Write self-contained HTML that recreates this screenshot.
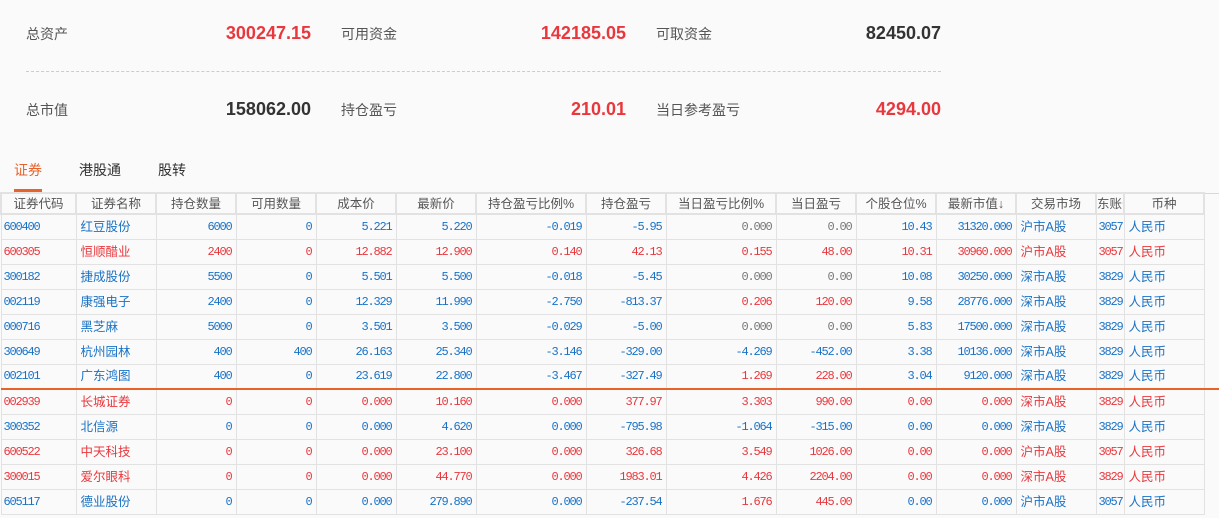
<!DOCTYPE html>
<html><head><meta charset="utf-8"><style>
*{margin:0;padding:0;box-sizing:border-box}
body{width:1219px;height:518px;overflow:hidden;background:#fafafa;font-family:"Liberation Sans","Noto Sans CJK SC",sans-serif;position:relative}
.lb{position:absolute;font-size:14px;color:#555}
.v{position:absolute;font-size:18px;font-weight:bold;text-align:right;width:200px}
.r{color:#e8383d}.k{color:#333}
.dash{position:absolute;left:26px;top:71px;width:915px;border-top:1px dashed #ccc}
.tab{position:absolute;top:160px;font-size:14px;color:#333}
table{position:absolute;left:0;top:192px;border-collapse:collapse;table-layout:fixed;border-top:1px solid #d8d8d8}
td,th{height:25px;line-height:14px;vertical-align:middle;border:1px solid #e2e2e2;font-size:12px;font-family:"Liberation Mono","Noto Sans CJK SC",monospace;letter-spacing:-1.2px;text-align:right;padding:0 4px;white-space:nowrap;overflow:hidden}
th{height:21px;font-weight:normal;font-family:"Liberation Sans","Noto Sans CJK SC",sans-serif;font-size:12.5px;color:#555;text-align:center;border:2px solid #e2e2e2;letter-spacing:0;padding:0}
td.n{text-align:left;font-family:"Liberation Sans","Noto Sans CJK SC",sans-serif;font-size:12.5px;letter-spacing:0}
td.c{text-align:left;padding-left:2px}
td.a{padding:0 1px}
td.a div{display:flex;justify-content:flex-end;overflow:hidden}
tr.B td{color:#1a72c6}tr.R td{color:#e8383d}
tr td.b{color:#1a72c6}tr td.rr{color:#e8383d}tr td.g{color:#777}
tr.sep td{border-bottom:2px solid #e8632a}
</style></head><body>
<div class="lb" style="left:26px;top:24px">总资产</div>
<div class="v r" style="left:111px;top:23px">300247.15</div>
<div class="lb" style="left:341px;top:24px">可用资金</div>
<div class="v r" style="left:426px;top:23px">142185.05</div>
<div class="lb" style="left:656px;top:24px">可取资金</div>
<div class="v k" style="left:741px;top:23px">82450.07</div>
<div class="dash"></div>
<div class="lb" style="left:26px;top:100px">总市值</div>
<div class="v k" style="left:111px;top:99px">158062.00</div>
<div class="lb" style="left:341px;top:100px">持仓盈亏</div>
<div class="v r" style="left:426px;top:99px">210.01</div>
<div class="lb" style="left:656px;top:100px">当日参考盈亏</div>
<div class="v r" style="left:741px;top:99px">4294.00</div>
<div class="tab" style="left:14px;color:#e8632a">证券</div>
<div style="position:absolute;left:14px;top:189px;width:28px;height:3px;background:#e8632a"></div>
<div class="tab" style="left:79px">港股通</div>
<div class="tab" style="left:158px">股转</div>
<table style="width:1219px">
<colgroup><col style="width:75px"><col style="width:80px"><col style="width:80px"><col style="width:80px"><col style="width:80px"><col style="width:80px"><col style="width:110px"><col style="width:80px"><col style="width:110px"><col style="width:80px"><col style="width:80px"><col style="width:80px"><col style="width:80px"><col style="width:28px"><col style="width:80px"><col style="width:16px"></colgroup>
<tr><th>证券代码</th><th>证券名称</th><th>持仓数量</th><th>可用数量</th><th>成本价</th><th>最新价</th><th>持仓盈亏比例%</th><th>持仓盈亏</th><th>当日盈亏比例%</th><th>当日盈亏</th><th>个股仓位%</th><th>最新市值↓</th><th>交易市场</th><th style="text-align:left">东账号</th><th>币种</th><th style="border:none"></th></tr>
<tr class="B"><td class="c">600400</td><td class="n">红豆股份</td><td>6000</td><td>0</td><td>5.221</td><td>5.220</td><td>-0.019</td><td>-5.95</td><td class="g">0.000</td><td class="g">0.00</td><td>10.43</td><td>31320.000</td><td class="n">沪市A股</td><td class="a"><div>3057</div></td><td class="n">人民币</td><td style="border:none"></td></tr>
<tr class="R"><td class="c">600305</td><td class="n">恒顺醋业</td><td>2400</td><td>0</td><td>12.882</td><td>12.900</td><td>0.140</td><td>42.13</td><td>0.155</td><td>48.00</td><td>10.31</td><td>30960.000</td><td class="n">沪市A股</td><td class="a"><div>3057</div></td><td class="n">人民币</td><td style="border:none"></td></tr>
<tr class="B"><td class="c">300182</td><td class="n">捷成股份</td><td>5500</td><td>0</td><td>5.501</td><td>5.500</td><td>-0.018</td><td>-5.45</td><td class="g">0.000</td><td class="g">0.00</td><td>10.08</td><td>30250.000</td><td class="n">深市A股</td><td class="a"><div>3829</div></td><td class="n">人民币</td><td style="border:none"></td></tr>
<tr class="B"><td class="c">002119</td><td class="n">康强电子</td><td>2400</td><td>0</td><td>12.329</td><td>11.990</td><td>-2.750</td><td>-813.37</td><td class="rr">0.206</td><td class="rr">120.00</td><td>9.58</td><td>28776.000</td><td class="n">深市A股</td><td class="a"><div>3829</div></td><td class="n">人民币</td><td style="border:none"></td></tr>
<tr class="B"><td class="c">000716</td><td class="n">黑芝麻</td><td>5000</td><td>0</td><td>3.501</td><td>3.500</td><td>-0.029</td><td>-5.00</td><td class="g">0.000</td><td class="g">0.00</td><td>5.83</td><td>17500.000</td><td class="n">深市A股</td><td class="a"><div>3829</div></td><td class="n">人民币</td><td style="border:none"></td></tr>
<tr class="B"><td class="c">300649</td><td class="n">杭州园林</td><td>400</td><td>400</td><td>26.163</td><td>25.340</td><td>-3.146</td><td>-329.00</td><td>-4.269</td><td>-452.00</td><td>3.38</td><td>10136.000</td><td class="n">深市A股</td><td class="a"><div>3829</div></td><td class="n">人民币</td><td style="border:none"></td></tr>
<tr class="B sep"><td class="c">002101</td><td class="n">广东鸿图</td><td>400</td><td>0</td><td>23.619</td><td>22.800</td><td>-3.467</td><td>-327.49</td><td class="rr">1.269</td><td class="rr">228.00</td><td>3.04</td><td>9120.000</td><td class="n">深市A股</td><td class="a"><div>3829</div></td><td class="n">人民币</td><td style="border-left:none;border-right:none;border-top:none"></td></tr>
<tr class="R"><td class="c">002939</td><td class="n">长城证券</td><td>0</td><td>0</td><td>0.000</td><td>10.160</td><td>0.000</td><td>377.97</td><td>3.303</td><td>990.00</td><td>0.00</td><td>0.000</td><td class="n">深市A股</td><td class="a"><div>3829</div></td><td class="n">人民币</td><td style="border:none"></td></tr>
<tr class="B"><td class="c">300352</td><td class="n">北信源</td><td>0</td><td>0</td><td>0.000</td><td>4.620</td><td>0.000</td><td>-795.98</td><td>-1.064</td><td>-315.00</td><td>0.00</td><td>0.000</td><td class="n">深市A股</td><td class="a"><div>3829</div></td><td class="n">人民币</td><td style="border:none"></td></tr>
<tr class="R"><td class="c">600522</td><td class="n">中天科技</td><td>0</td><td>0</td><td>0.000</td><td>23.100</td><td>0.000</td><td>326.68</td><td>3.549</td><td>1026.00</td><td>0.00</td><td>0.000</td><td class="n">沪市A股</td><td class="a"><div>3057</div></td><td class="n">人民币</td><td style="border:none"></td></tr>
<tr class="R"><td class="c">300015</td><td class="n">爱尔眼科</td><td>0</td><td>0</td><td>0.000</td><td>44.770</td><td>0.000</td><td>1983.01</td><td>4.426</td><td>2204.00</td><td>0.00</td><td>0.000</td><td class="n">深市A股</td><td class="a"><div>3829</div></td><td class="n">人民币</td><td style="border:none"></td></tr>
<tr class="B"><td class="c">605117</td><td class="n">德业股份</td><td>0</td><td>0</td><td>0.000</td><td>279.890</td><td>0.000</td><td>-237.54</td><td class="rr">1.676</td><td class="rr">445.00</td><td>0.00</td><td>0.000</td><td class="n">沪市A股</td><td class="a"><div>3057</div></td><td class="n">人民币</td><td style="border:none"></td></tr>
</table>
</body></html>
